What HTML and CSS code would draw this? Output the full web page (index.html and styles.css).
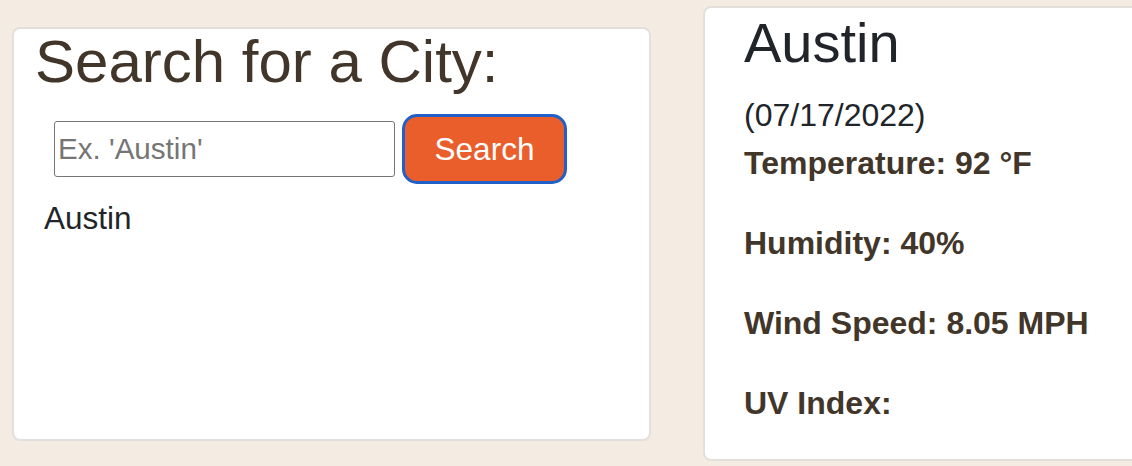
FILE: index.html
```html
<!DOCTYPE html>
<html lang="en">
<head>
<meta charset="utf-8">
<title>Weather Dashboard</title>
<link rel="stylesheet" href="styles.css">
</head>
<body>
<main class="page">
  <section class="card search-card">
    <h2 class="search-title">Search for a City:</h2>
    <form class="search-form">
      <input class="search-input" type="text" placeholder="Ex. 'Austin'">
      <button class="search-btn" type="button">Search</button>
    </form>
    <ul class="history">
      <li class="history-item">Austin</li>
    </ul>
  </section>
  <section class="card weather-card">
    <h1 class="city-name">Austin</h1>
    <p class="city-date">(07/17/2022)</p>
    <p class="stat stat-first">Temperature: 92 °F</p>
    <p class="stat">Humidity: 40%</p>
    <p class="stat">Wind Speed: 8.05 MPH</p>
    <p class="stat">UV Index:</p>
  </section>
</main>
</body>
</html>
```
FILE: styles.css
```css
html, body {
  margin: 0;
  padding: 0;
}
body {
  background: #f4ece3;
  font-family: "Liberation Sans", Arial, Helvetica, sans-serif;
  width: 1132px;
  height: 466px;
  overflow: hidden;
}
.page {
  display: flex;
  align-items: flex-start;
  padding-left: 12px;
}
.card {
  flex-shrink: 0;
  background: #ffffff;
  border: 2px solid #e2dfdc;
  border-radius: 8px;
  box-sizing: border-box;
}
.search-card {
  width: 639px;
  height: 414px;
  margin-top: 27px;
  padding: 3px 0 0 21px;
}
.search-title {
  margin: 0;
  font-size: 60px;
  line-height: 60px;
  font-weight: 400;
  color: #42362a;
}
.search-form {
  display: flex;
  align-items: center;
  gap: 7px;
  margin: 22px 0 0 19px;
}
.search-input {
  width: 341px;
  height: 56px;
  box-sizing: border-box;
  border: 1px solid #767676;
  border-radius: 3px;
  padding: 0 3px;
  font-family: "Liberation Sans", Arial, sans-serif;
  font-size: 29.6px;
  color: #222;
  outline: none;
}
.search-input::placeholder {
  color: #757575;
}
.search-btn {
  width: 165px;
  height: 70px;
  box-sizing: border-box;
  background: #ea5e2c;
  border: 3px solid #2160c6;
  border-radius: 15px;
  color: #ffffff;
  font-family: "Liberation Sans", Arial, sans-serif;
  font-size: 31.5px;
  padding: 0;
}
.history {
  list-style: none;
  margin: 19px 0 0 9px;
  padding: 0;
}
.history-item {
  font-size: 31.5px;
  line-height: 31px;
  color: #212529;
}
.weather-card {
  width: 460px;
  height: 455px;
  margin-top: 6px;
  margin-left: 52px;
  padding: 7px 0 0 39px;
}
.city-name {
  margin: 0;
  font-size: 56px;
  line-height: 56px;
  font-weight: 400;
  color: #212529;
}
.city-date {
  margin: 29px 0 0;
  font-size: 32px;
  line-height: 31px;
  color: #212529;
}
.stat {
  margin: 49px 0 0;
  font-size: 32px;
  line-height: 31px;
  font-weight: 700;
  color: #42362a;
}
.stat-first {
  margin-top: 17px;
}
```
